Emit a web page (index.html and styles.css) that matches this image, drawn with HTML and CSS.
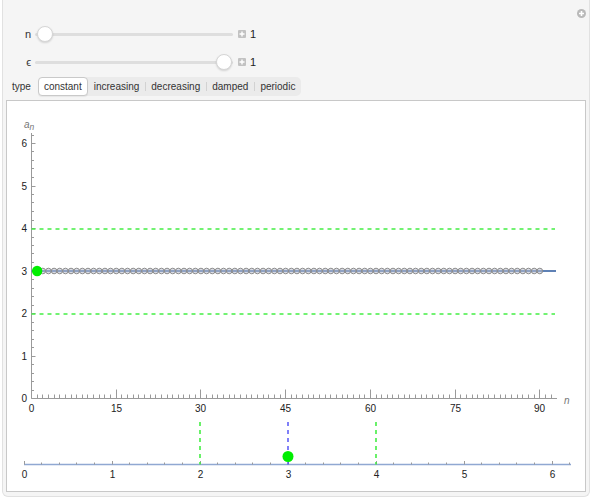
FILE: index.html
```html
<!DOCTYPE html>
<html lang="en">
<head>
    <title>Sequence Convergence</title>
    <link rel="stylesheet" href="styles.css">
</head>
<body>
    <div class="panel">
        <!-- Small round add button in the corner -->
        <span class="corner-button">
            <svg width="9" height="9" viewBox="0 0 9 9"><path d="M4.5 2v5M2 4.5h5" stroke="#fff" stroke-width="1.6"/></svg>
        </span>

        <!-- Manipulator controls -->
        <div class="controls">
            <div class="slider-row">
                <span class="slider-label">n</span>
                <div class="slider-track">
                    <div class="slider-thumb" style="left: 2px"></div>
                </div>
                <span class="plus-box">
                    <svg width="8" height="8" viewBox="0 0 8 8"><path d="M4 1.5v5M1.5 4h5" stroke="#fff" stroke-width="1.4"/></svg>
                </span>
                <span class="slider-value">1</span>
            </div>
            <div class="slider-row">
                <span class="slider-label">&#1013;</span>
                <div class="slider-track">
                    <div class="slider-thumb" style="left: 181px"></div>
                </div>
                <span class="plus-box">
                    <svg width="8" height="8" viewBox="0 0 8 8"><path d="M4 1.5v5M1.5 4h5" stroke="#fff" stroke-width="1.4"/></svg>
                </span>
                <span class="slider-value">1</span>
            </div>
            <div class="type-row">
                <span class="type-label">type</span>
                <div class="segmented">
                    <button class="seg active">constant</button>
                    <button class="seg">increasing</button>
                    <button class="seg">decreasing</button>
                    <button class="seg">damped</button>
                    <button class="seg">periodic</button>
                </div>
            </div>
        </div>

        <!-- Plot area: sequence plot and number line -->
        <div class="plot-box">
            <svg id="plot" width="578" height="390" viewBox="7 100 578 390"></svg>
        </div>
    </div>

    <script>
        const NS = 'http://www.w3.org/2000/svg';
        const svg = document.getElementById('plot');

        // Plot geometry (page pixels)
        const main = { x0: 31.5, y0: 397.5, ux: 5.648, uy: 42.5 };
        const line = { x0: 24, y: 463.5, ux: 88 };
        const value = 3;
        const eps = 1;
        const n = 1;

        // snap to the pixel centre so 1px lines stay crisp
        const snap = (v) => Math.round(v - 0.5) + 0.5;

        function add(tag, attrs, text) {
            const el = document.createElementNS(NS, tag);
            for (const k in attrs) el.setAttribute(k, attrs[k]);
            if (text !== undefined) el.textContent = text;
            svg.appendChild(el);
            return el;
        }

        // --- Sequence plot ---
        // y axis with ticks
        add('line', { x1: main.x0, y1: 132, x2: main.x0, y2: main.y0, class: 'axis' });
        for (let i = 0; i <= 31; i++) {
            const y = snap(main.y0 - i * 0.2 * main.uy);
            const major = i % 5 === 0;
            add('line', { x1: main.x0, y1: y, x2: main.x0 + (major ? 4 : 2.5), y2: y, class: 'tick' });
            if (major) add('text', { x: 27, y: y + 3.5, 'text-anchor': 'end', class: 'tick-label' }, i / 5);
        }

        // x axis with ticks
        add('line', { x1: main.x0, y1: main.y0, x2: 557, y2: main.y0, class: 'axis' });
        for (let k = 0; k <= 92; k++) {
            const x = snap(main.x0 + k * main.ux);
            const major = k % 15 === 0;
            if (k > 0) add('line', { x1: x, y1: main.y0, x2: x, y2: main.y0 - (major ? 9 : 4), class: 'tick' });
            if (major) add('text', { x: x, y: main.y0 + 13.5, 'text-anchor': 'middle', class: 'tick-label' }, k);
        }

        // axis labels
        add('text', { x: 564, y: 403, class: 'axis-label' }, 'n');
        const an = add('text', { x: 24, y: 127, class: 'axis-label' }, 'a');
        const sub = document.createElementNS(NS, 'tspan');
        sub.setAttribute('dy', '2');
        sub.setAttribute('font-size', '8.5');
        sub.textContent = 'n';
        an.appendChild(sub);

        // epsilon band
        [value + eps, value - eps].forEach((v) => {
            const y = Math.round(main.y0 - v * main.uy);
            add('line', { x1: main.x0, y1: y, x2: 555, y2: y, class: 'band' });
        });

        // limit line and sequence terms
        const ly = main.y0 - value * main.uy;
        add('line', { x1: main.x0, y1: ly, x2: 556, y2: ly, class: 'limit' });
        for (let k = 1; k <= 90; k++) {
            add('circle', { cx: main.x0 + k * main.ux, cy: ly, r: 2.8, class: 'term' });
        }
        add('circle', { cx: main.x0 + n * main.ux, cy: ly, r: 5.2, class: 'current' });

        // --- Number line ---
        add('line', { x1: line.x0, y1: line.y, x2: 571, y2: line.y, class: 'number-line' });
        for (let i = 0; i <= 31; i++) {
            const x = snap(line.x0 + i * 0.2 * line.ux);
            const major = i % 5 === 0;
            add('line', { x1: x, y1: line.y, x2: x, y2: line.y - (major ? 3.5 : 2), class: 'tick' });
            if (major) add('text', { x: x, y: line.y + 13.5, 'text-anchor': 'middle', class: 'tick-label' }, i / 5);
        }
        [value - eps, value + eps].forEach((v) => {
            const x = Math.round(line.x0 + v * line.ux);
            add('line', { x1: x, y1: 421, x2: x, y2: line.y, class: 'band' });
        });
        const vx = Math.round(line.x0 + value * line.ux);
        add('line', { x1: vx, y1: 421, x2: vx, y2: line.y, class: 'marker' });
        add('circle', { cx: vx, cy: 455.5, r: 5.5, class: 'current' });
    </script>
</body>
</html>
```

FILE: styles.css
```css
/* Base page */
body {
    margin: 0;
    font-family: "Liberation Sans", Arial, sans-serif;
    background: #fff;
    color: #222;
}

/* Outer manipulate panel */
.panel {
    position: relative;
    box-sizing: border-box;
    width: 588px;
    height: 497px;
    margin-left: 2px;
    padding: 26px 3px 0 3px;
    background: #f5f5f5;
    border: 1px solid #e1e1e1;
    border-top: none;
    border-radius: 0 0 6px 6px;
}

.corner-button {
    position: absolute;
    top: 9px;
    right: 3px;
    width: 9px;
    height: 9px;
    border-radius: 50%;
    background: #b9b9b9;
    display: flex;
}

/* Controls */
.controls {
    display: flex;
    flex-direction: column;
}

.slider-row {
    display: flex;
    align-items: center;
    height: 16px;
    font-size: 11px;
}

.slider-row + .slider-row {
    margin-top: 12px;
}

.slider-label {
    width: 25px;
    text-align: right;
    color: #333;
}

.slider-track {
    position: relative;
    width: 198px;
    height: 3px;
    margin-left: 4px;
    background: #dedede;
    border-radius: 2px;
}

.slider-thumb {
    position: absolute;
    top: -7px;
    width: 16px;
    height: 16px;
    box-sizing: border-box;
    border-radius: 50%;
    background: #fff;
    border: 1px solid #d6d6d6;
    box-shadow: 0 1px 2px rgba(0, 0, 0, 0.15);
}

.plus-box {
    display: flex;
    width: 8px;
    height: 8px;
    margin-left: 5px;
    background: #c2c2c2;
    border-radius: 1px;
}

.slider-value {
    margin-left: 4px;
    font-size: 11px;
}

/* Type selector */
.type-row {
    display: flex;
    align-items: center;
    margin-top: 7px;
    padding-left: 6px;
}

.type-label {
    font-size: 10px;
    color: #333;
    margin-right: 7px;
}

.segmented {
    display: flex;
    height: 19px;
    background: #ebebeb;
    border-radius: 5px;
}

.seg {
    position: relative;
    font-family: inherit;
    font-size: 10px;
    color: #333;
    background: none;
    border: 1px solid transparent;
    border-radius: 4px;
    padding: 0 5px;
    margin: 0;
}

.seg + .seg::before {
    content: "";
    position: absolute;
    left: -1px;
    top: 4px;
    bottom: 4px;
    width: 1px;
    background: #d2d2d2;
}

.seg.active {
    background: #fff;
    border-color: #c9c9c9;
    box-shadow: 0 1px 1px rgba(0, 0, 0, 0.06);
}

.seg.active + .seg::before {
    display: none;
}

/* Plot */
.plot-box {
    box-sizing: border-box;
    width: 580px;
    height: 392px;
    margin-top: 4px;
    background: #fff;
    border: 1px solid #c8c8c8;
}

#plot {
    display: block;
}

.axis {
    stroke: #9a9a9a;
    stroke-width: 1;
}

.tick {
    stroke: #9a9a9a;
    stroke-width: 1;
}

.tick-label {
    font-size: 10px;
    fill: #222;
}

.axis-label {
    font-size: 10px;
    font-style: italic;
    fill: #777;
}

.band {
    stroke: #44ee44;
    stroke-width: 1.6;
    stroke-dasharray: 4 4;
}

.limit {
    stroke: #5e81b5;
    stroke-width: 2;
}

.term {
    fill: rgba(185, 190, 205, 0.55);
    stroke: #8c8c8c;
    stroke-width: 1;
}

.current {
    fill: #0e0;
}

.number-line {
    stroke: #90a8d2;
    stroke-width: 1.6;
}

.marker {
    stroke: #4a4af5;
    stroke-width: 1.4;
    stroke-dasharray: 4 4;
}
```
